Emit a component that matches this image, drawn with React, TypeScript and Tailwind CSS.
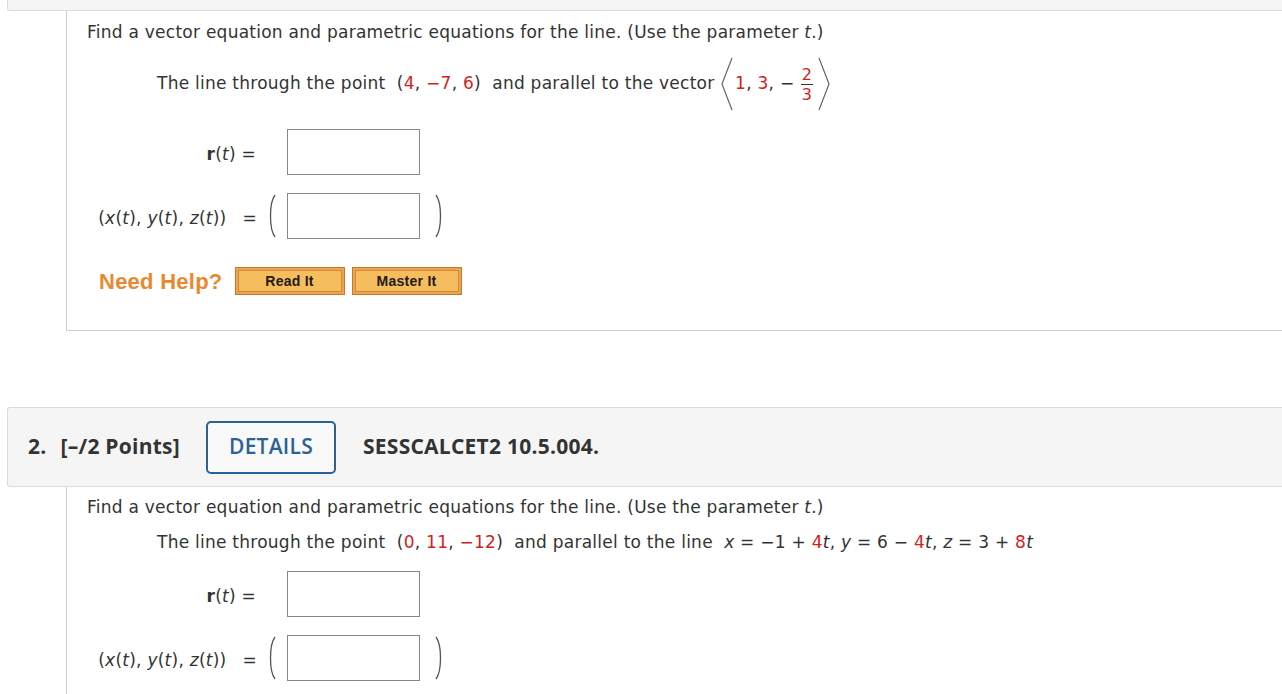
import React from "react";

const V = { fontFamily: '"DejaVu Sans", Verdana, sans-serif', letterSpacing: "0.25px" };
const OS = { fontFamily: '"Open Sans", "Noto Sans", sans-serif' };
const AR = { fontFamily: '"Liberation Sans", Arial, sans-serif' };

const R = ({ children }: { children: React.ReactNode }) => (
  <span className="text-[#d4211c]">{children}</span>
);
const I = ({ children }: { children: React.ReactNode }) => <i>{children}</i>;

function LParen() {
  return (
    <svg width="10" height="46" viewBox="0 0 10 46" className="block">
      <path d="M8 2 C2 10 2 36 8 44" stroke="#555" strokeWidth="1.3" fill="none" />
    </svg>
  );
}
function RParen() {
  return (
    <svg width="10" height="46" viewBox="0 0 10 46" className="block">
      <path d="M2 2 C8 10 8 36 2 44" stroke="#555" strokeWidth="1.3" fill="none" />
    </svg>
  );
}

function AnswerRows() {
  return (
    <>
      <div className="flex items-center h-[46px]">
        <div className="w-[170px] text-right pr-[1px] text-[17px] text-[#333] pt-[6px]" style={V}>
          <b>r</b>(<I>t</I>) =
        </div>
        <div className="w-[30px]" />
        <div className="w-[133px] h-[46px] border border-[#888] bg-white" />
      </div>
      <div className="flex items-center h-[46px] mt-[18px]">
        <div className="w-[170px] flex justify-end text-[17px] text-[#333] whitespace-nowrap pt-[6px]" style={V}>
          <span>
            (<I>x</I>(<I>t</I>), <I>y</I>(<I>t</I>), <I>z</I>(<I>t</I>))
          </span>
          <span className="ml-[16px]">=</span>
        </div>
        <div className="w-[30px] flex justify-start pl-[10px]">
          <LParen />
        </div>
        <div className="w-[133px] h-[46px] border border-[#888] bg-white" />
        <div className="pl-[14px]">
          <RParen />
        </div>
      </div>
    </>
  );
}

function OrangeBtn({ label }: { label: string }) {
  return (
    <div className="w-[110px] h-[28px] border border-[#c47a2c] bg-[#f0a24c] p-[2px]">
      <div
        className="w-full h-full border border-[#d08a3c] bg-[#f5bd5e] flex items-center justify-center text-[14px] font-bold text-[#1f1a14]"
        style={AR}
      >
        {label}
      </div>
    </div>
  );
}

export default function App() {
  return (
    <div className="w-[1282px] h-[694px] bg-white overflow-hidden text-[#333]" style={V}>
      {/* top strip of previous header */}
      <div className="ml-[7px] h-[11px] bg-[#f5f5f5] border-l border-b border-[#dcdcdc] rounded-bl-[3px]" />

      {/* question 1 body */}
      <div className="ml-[66px] h-[320px] border-l border-b border-[#cfcfcf] pl-[20px] pt-[10px]">
        <div className="h-[24px] flex items-center text-[17px] whitespace-nowrap">
          Find a vector equation and parametric equations for the line. (Use the parameter&nbsp;<I>t</I>.)
        </div>
        <div className="mt-[12px] h-[54px] flex items-center ml-[70px] text-[17px] whitespace-nowrap">
          <span>The line through the point&nbsp;&nbsp;</span>
          <span>
            (<R>4</R>, <R>−7</R>, <R>6</R>)
          </span>
          <span>&nbsp;&nbsp;and parallel to the vector&nbsp;</span>
          <svg width="14" height="54" viewBox="0 0 14 54" className="block">
            <polyline points="12,1 2,27 12,53" stroke="#666" strokeWidth="1.2" fill="none" />
          </svg>
          <span className="ml-[1px]">
            <R>1</R>, <R>3</R>, −&nbsp;
          </span>
          <span className="inline-flex flex-col items-center text-[16px] leading-[19px] mx-[1px]">
            <R>2</R>
            <span className="block w-[12px] h-[1px] bg-[#333]" />
            <R>3</R>
          </span>
          <svg width="14" height="54" viewBox="0 0 14 54" className="block ml-[3px]">
            <polyline points="2,1 12,27 2,53" stroke="#666" strokeWidth="1.2" fill="none" />
          </svg>
        </div>
        <div className="mt-[18px]">
          <AnswerRows />
        </div>
        <div className="mt-[28px] h-[28px] flex items-center">
          <span className="ml-[12px] text-[22px] font-bold text-[#e8892f]" style={AR}>
            Need Help?
          </span>
          <div className="ml-[12px] flex gap-[7px]">
            <OrangeBtn label="Read It" />
            <OrangeBtn label="Master It" />
          </div>
        </div>
      </div>

      {/* question 2 header */}
      <div
        className="mt-[76px] ml-[7px] h-[80px] bg-[#f5f5f5] border-t border-l border-b border-[#dcdcdc] rounded-l-[3px] flex items-center text-[#333]"
        style={OS}
      >
        <span className="ml-[20px] text-[21px] font-bold">2.</span>
        <span className="ml-[14px] text-[21px] font-bold">[–/2 Points]</span>
        <div className="ml-[26px] w-[130px] h-[53px] border-2 border-[#2b6296] rounded-[5px] bg-[#f9f9f9] flex items-center justify-center text-[21px] font-semibold text-[#2b6296]">
          DETAILS
        </div>
        <span className="ml-[27px] text-[21px] font-bold">SESSCALCET2 10.5.004.</span>
      </div>

      {/* question 2 body */}
      <div className="ml-[66px] h-[300px] border-l border-[#cfcfcf] pl-[20px] pt-[9px]">
        <div className="h-[24px] flex items-center text-[17px] whitespace-nowrap">
          Find a vector equation and parametric equations for the line. (Use the parameter&nbsp;<I>t</I>.)
        </div>
        <div className="mt-[11px] h-[24px] flex items-center ml-[70px] text-[17px] whitespace-pre">
          <span>The line through the point  </span>
          <span>
            (<R>0</R>, <R>11</R>, <R>−12</R>)
          </span>
          <span>  and parallel to the line  </span>
          <span>
            <I>x</I> = −1 + <R>4</R><I>t</I>, <I>y</I> = 6 − <R>4</R><I>t</I>, <I>z</I> = 3 + <R>8</R><I>t</I>
          </span>
        </div>
        <div className="mt-[16px]">
          <AnswerRows />
        </div>
      </div>
    </div>
  );
}
